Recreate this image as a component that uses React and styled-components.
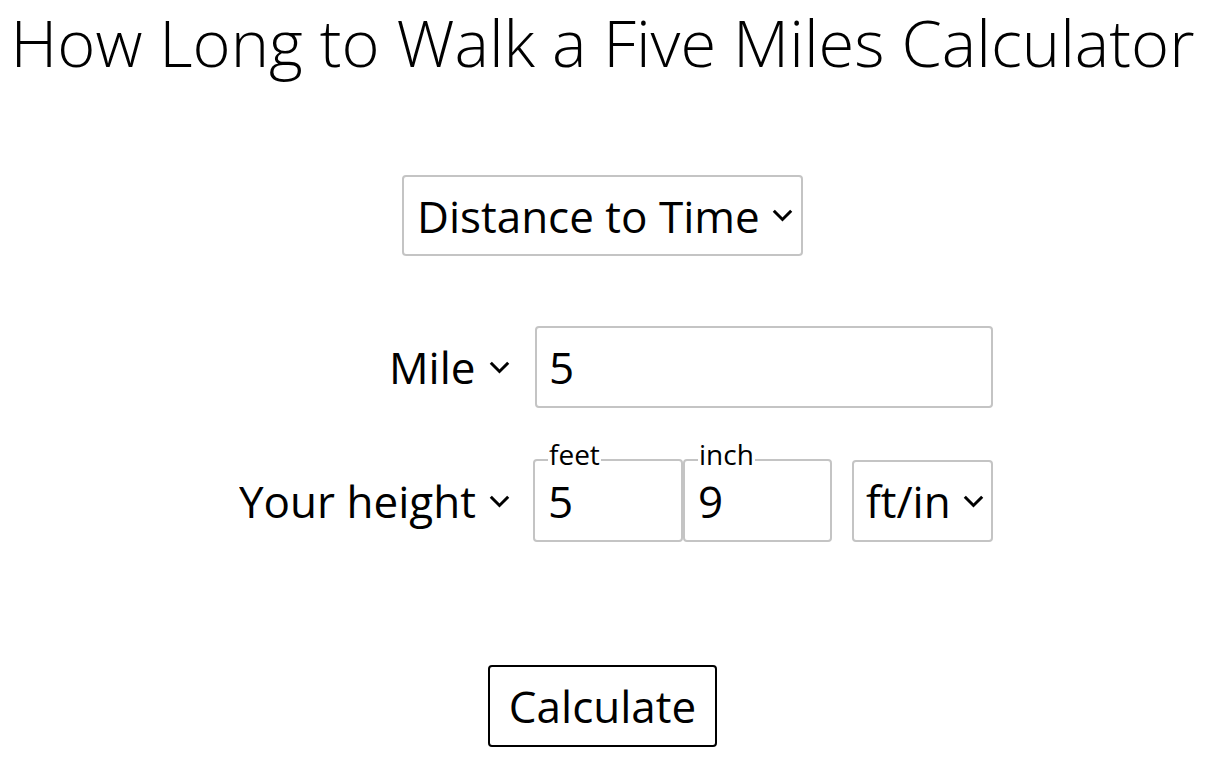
import React from 'react'
import styled, { createGlobalStyle } from 'styled-components'

const GlobalStyle = createGlobalStyle`
  body {
    margin: 0;
    background: #fff;
    color: #000;
    font-family: "Segoe UI", "Open Sans", "Noto Sans", sans-serif;
  }
`;

const Page = styled.main`
  display: flex;
  flex-direction: column;
  align-items: center;
  padding-right: 10px;
`;

const Title = styled.h1`
  margin: 0;
  font-size: 65px;
  font-weight: 300;
  line-height: 84px;
  white-space: nowrap;
`;

const SelectBox = styled.div`
  display: inline-flex;
  align-items: center;
  gap: 12px;
  height: 81px;
  padding: 0 8px 0 13px;
  border: 2px solid #c4c4c4;
  border-radius: 4px;
  box-sizing: border-box;
  margin-top: 91px;
`;

const PlainSelect = styled.select`
  appearance: none;
  border: none;
  background: transparent;
  font: inherit;
  font-size: 44px;
  color: #000;
  padding: 0;
  outline: none;
`;

const Chevron = () => (
  <svg width="21" height="13" viewBox="0 0 21 13">
    <path d="M1.8 1.8 L10.5 10.5 L19.2 1.8" fill="none" stroke="#000" strokeWidth="3" />
  </svg>
);

const Form = styled.div`
  align-self: stretch;
  display: grid;
  grid-template-columns: 1fr 458px;
  column-gap: 25px;
  row-gap: 32px;
  padding-right: 212px;
  margin-top: 70px;
  align-items: end;
`;

const Label = styled.div`
  display: flex;
  justify-content: flex-end;
  align-items: center;
  gap: 13px;
  height: 82px;
`;

const TextInput = styled.input`
  box-sizing: border-box;
  width: 458px;
  height: 82px;
  border: 2px solid #c4c4c4;
  border-radius: 4px;
  padding: 0 12px;
  font: inherit;
  font-size: 44px;
  outline: none;
`;

const HeightGroup = styled.div`
  display: flex;
  align-items: flex-end;
  margin-left: -2px;
`;

const Field = styled.fieldset`
  box-sizing: border-box;
  width: ${p => p.$width}px;
  margin: 0;
  padding: 0 0 0 13px;
  border: 2px solid #c4c4c4;
  border-radius: 4px;
`;

const Legend = styled.legend`
  font-size: 28px;
  line-height: 28px;
  padding: 0 1px 12px;
`;

const FieldInput = styled.input`
  display: block;
  width: 100%;
  height: 60px;
  box-sizing: border-box;
  border: none;
  padding: 0 0 18px;
  font: inherit;
  font-size: 44px;
  background: transparent;
  outline: none;
`;

const UnitBox = styled.div`
  display: flex;
  align-items: center;
  justify-content: space-between;
  box-sizing: border-box;
  margin-left: 20px;
  width: 141px;
  height: 82px;
  padding: 0 7px 0 12px;
  border: 2px solid #c4c4c4;
  border-radius: 4px;
`;

const CalcButton = styled.button`
  margin-top: 123px;
  height: 82px;
  padding: 0 19px;
  border: 2px solid #000;
  border-radius: 4px;
  background: #fff;
  font: inherit;
  font-size: 44px;
  color: #000;
  cursor: pointer;
`;

export default function App() {
  return (
    <Page>
      <GlobalStyle />
      <Title>How Long to Walk a Five Miles Calculator</Title>

      <SelectBox>
        <PlainSelect defaultValue="dt">
          <option value="dt">Distance to Time</option>
          <option value="td">Time to Distance</option>
        </PlainSelect>
        <Chevron />
      </SelectBox>

      <Form>
        <Label>
          <PlainSelect defaultValue="mile">
            <option value="mile">Mile</option>
          </PlainSelect>
          <Chevron />
        </Label>
        <TextInput defaultValue="5" />

        <Label>
          <PlainSelect defaultValue="height">
            <option value="height">Your height</option>
          </PlainSelect>
          <Chevron />
        </Label>
        <HeightGroup>
          <Field $width={150}>
            <Legend>feet</Legend>
            <FieldInput defaultValue="5" />
          </Field>
          <Field $width={149}>
            <Legend>inch</Legend>
            <FieldInput defaultValue="9" />
          </Field>
          <UnitBox>
            <PlainSelect defaultValue="ftin">
              <option value="ftin">ft/in</option>
            </PlainSelect>
            <Chevron />
          </UnitBox>
        </HeightGroup>
      </Form>

      <CalcButton>Calculate</CalcButton>
    </Page>
  )
}
